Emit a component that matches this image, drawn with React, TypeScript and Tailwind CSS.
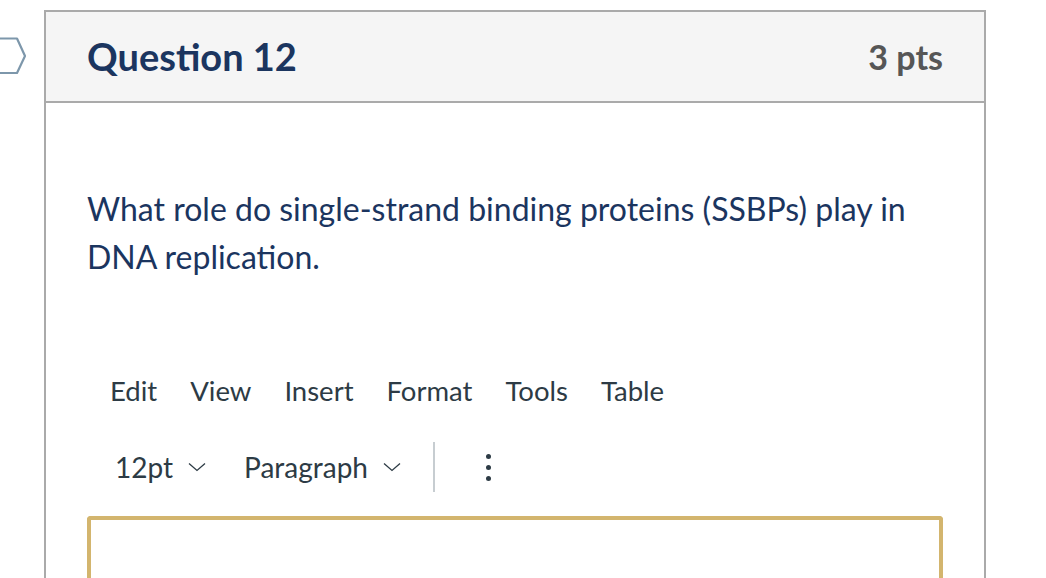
import React from "react";

function Chevron() {
  return (
    <svg width="18" height="10" viewBox="0 0 18 10" className="ml-[15px]">
      <path d="M1 1.5 L9 8.5 L17 1.5" fill="none" stroke="#2d3b45" strokeWidth="1.3" />
    </svg>
  );
}

const menu = ["Edit", "View", "Insert", "Format", "Tools", "Table"];

export default function App() {
  return (
    <div
      className="flex h-[578px] w-[1046px] overflow-hidden bg-white pt-[10px]"
      style={{ fontFamily: "Lato, 'Noto Sans', sans-serif" }}
    >
      <div className="w-[44px] shrink-0 pt-[27px]">
        <svg width="28" height="38" viewBox="0 0 28 38">
          <path
            d="M-10 1.5 L17 1.5 L25 19 L17 36 L-10 36"
            fill="none"
            stroke="#7d97ab"
            strokeWidth="2.2"
            strokeLinejoin="round"
          />
        </svg>
      </div>

      <div className="flex w-[942px] shrink-0 flex-col border-2 border-b-0 border-[#aaaaaa]">
        <div className="flex h-[91px] shrink-0 items-center justify-between border-b-2 border-[#aaaaaa] bg-[#f5f5f5] px-[41px]">
          <h2 className="text-[38px] font-bold text-[#1b355f]">Question 12</h2>
          <span className="text-[34px] font-bold text-[#565656]">3 pts</span>
        </div>

        <div className="flex shrink-0 flex-col px-[41px] pt-[82px]">
          <p className="text-[32px] leading-[48px] text-[#1b355f]">
            What role do single-strand binding proteins (SSBPs) play in DNA replication.
          </p>

          <div className="mt-[90px] flex h-[40px] items-center gap-[33px] pl-[23px] text-[27.5px] text-[#2d3b45]">
            {menu.map((m) => (
              <span key={m}>{m}</span>
            ))}
          </div>

          <div className="mt-[31px] flex h-[50px] items-center pl-[28px] text-[28px] text-[#2d3b45]">
            <span>12pt</span>
            <Chevron />
            <span className="ml-[38px]">Paragraph</span>
            <Chevron />
            <div className="ml-[32px] h-[50px] w-[2px] bg-[#c7cdd1]" />
            <div className="ml-[51px] flex flex-col gap-[6px]">
              <span className="h-[5px] w-[5px] rounded-full bg-[#2d3b45]" />
              <span className="h-[5px] w-[5px] rounded-full bg-[#2d3b45]" />
              <span className="h-[5px] w-[5px] rounded-full bg-[#2d3b45]" />
            </div>
          </div>

          <div className="mt-[24px] h-[120px] rounded-t-[4px] border-4 border-b-0 border-[#d3b56e]" />
        </div>
      </div>
    </div>
  );
}
